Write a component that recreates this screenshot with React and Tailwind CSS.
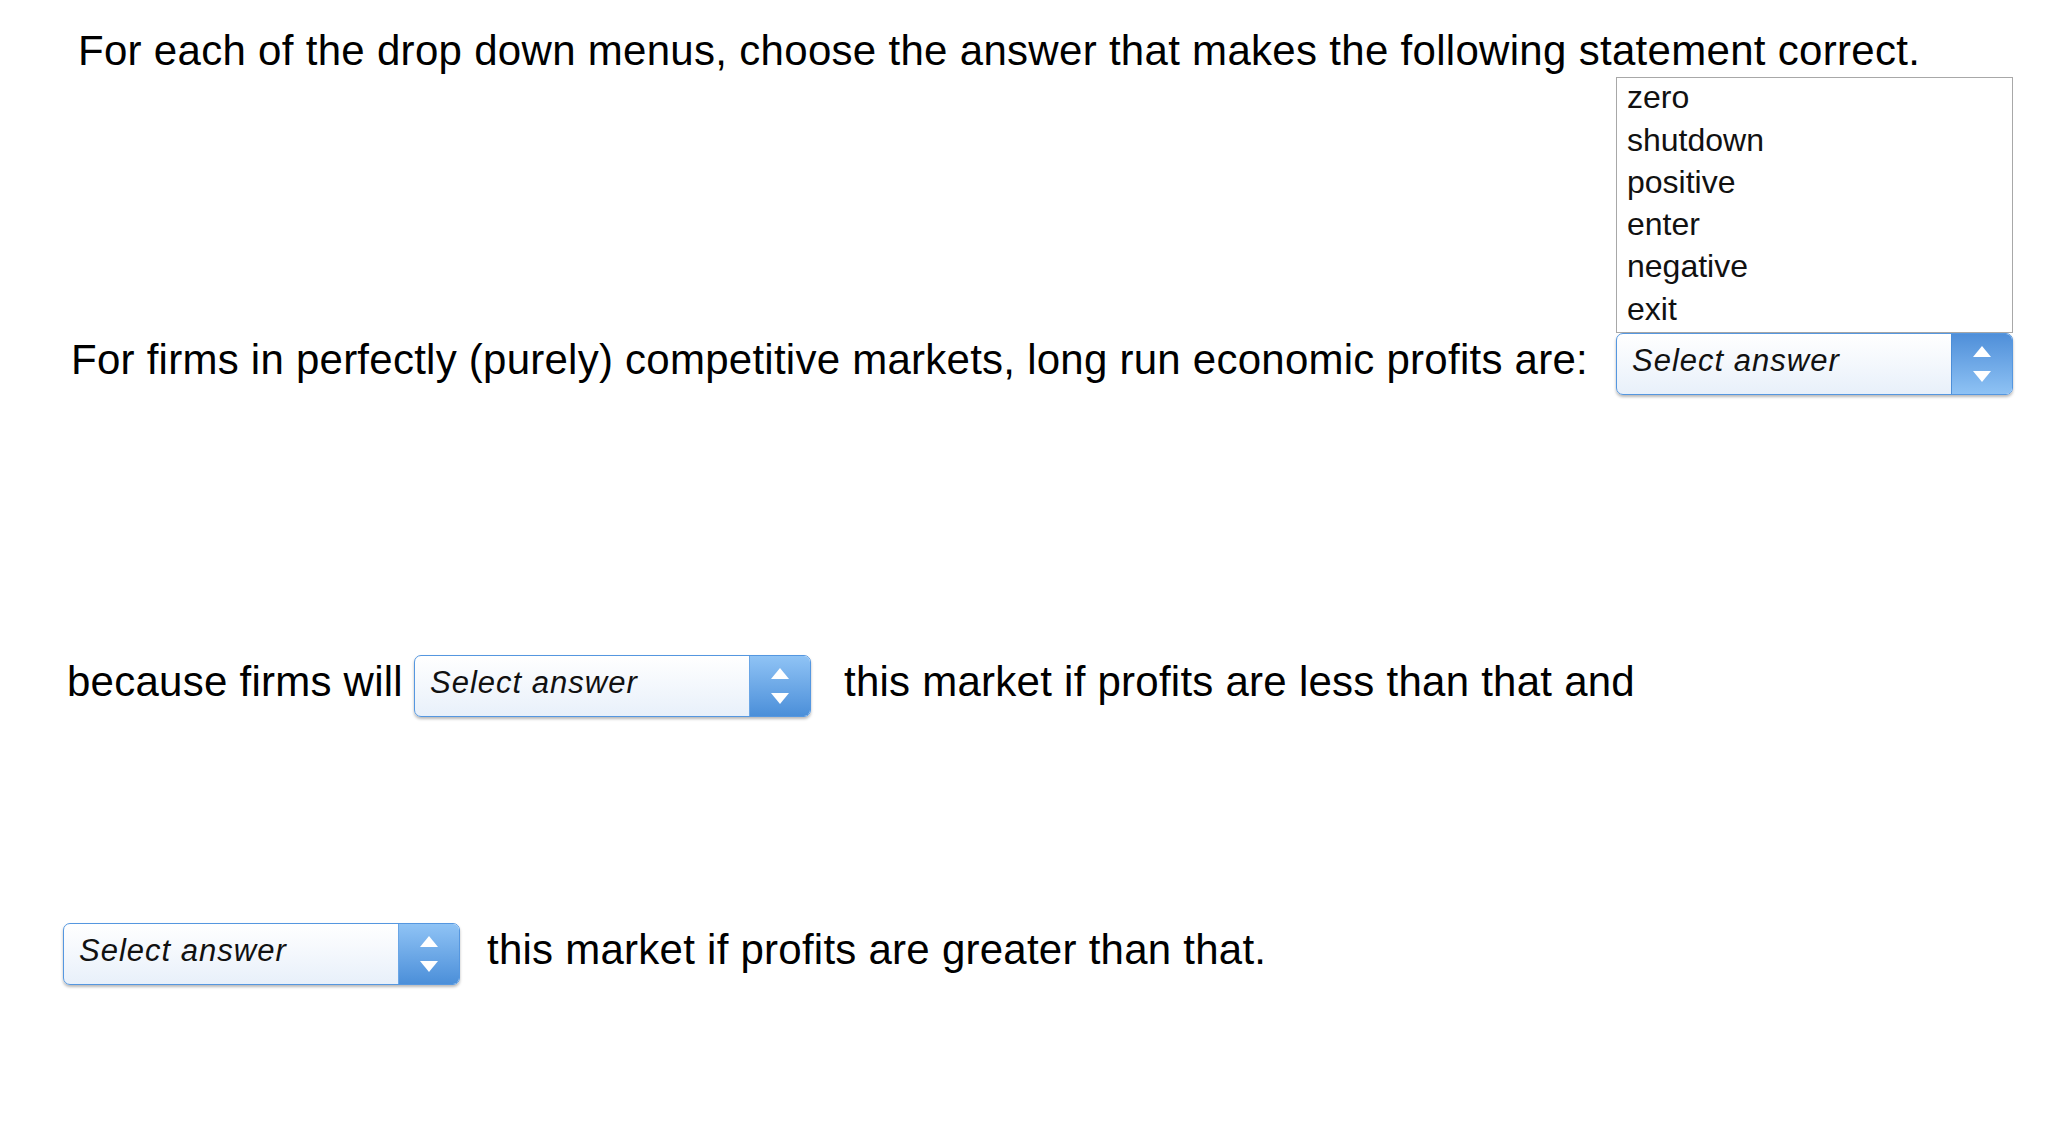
import React from "react";

function Arrows() {
  return (
    <svg width="20" height="36" viewBox="0 0 20 36" className="block">
      <polygon points="10,0 19,11 1,11" fill="#ffffff" />
      <polygon points="1,25 19,25 10,36" fill="#ffffff" />
    </svg>
  );
}

function Select({ active = false }) {
  return (
    <div className="relative w-[397px] h-[62px] shrink-0 rounded-[7px] border border-[#5597e0] shadow-[0_2px_3px_rgba(0,0,0,0.28)] bg-gradient-to-b from-white to-[#e8f0fa] flex overflow-hidden">
      <div className="flex-1 flex items-center pl-[15px]">
        <span className="text-[31px] leading-[31px] italic tracking-[1px] text-[#111] pb-[7px] whitespace-nowrap">
          Select answer
        </span>
      </div>
      <div
        className={
          active
            ? "w-[61px] h-full flex items-center justify-center border-l border-[#4d8fd8] bg-gradient-to-b from-[#4f8fd9] to-[#8ec2f4]"
            : "w-[61px] h-full flex items-center justify-center border-l border-[#6aa6e6] bg-gradient-to-b from-[#8fc3f5] to-[#4b8fd9]"
        }
      >
        <Arrows />
      </div>
    </div>
  );
}

const options = ["zero", "shutdown", "positive", "enter", "negative", "exit"];

export default function App() {
  return (
    <div className="w-[2046px] h-[1137px] overflow-hidden bg-white text-black font-['Liberation_Sans',Arial,sans-serif]">
      <p className="pl-[78px] pt-[30px] text-[42px] leading-[42px] tracking-[0.3px] whitespace-nowrap">
        For each of the drop down menus, choose the answer that makes the following statement correct.
      </p>

      <div className="mt-[261px] pl-[71px] flex items-center">
        <span className="w-[1545px] shrink-0 text-[42px] leading-[42px] tracking-[0.25px] pb-[8px] whitespace-nowrap">
          For firms in perfectly (purely) competitive markets, long run economic profits are:
        </span>
        <div className="relative">
          <div className="absolute bottom-full left-0 w-[397px] bg-white border border-[#a8a8a8]">
            {options.map((o) => (
              <div
                key={o}
                className="pl-[10px] pb-[4px] text-[32px] leading-[38.3px] text-[#111] whitespace-nowrap"
              >
                {o}
              </div>
            ))}
          </div>
          <Select active />
        </div>
      </div>

      <div className="mt-[260px] pl-[67px] flex items-center">
        <span className="w-[347px] shrink-0 text-[42px] leading-[42px] tracking-[0.25px] pb-[8px] whitespace-nowrap">
          because firms will
        </span>
        <Select />
        <span className="ml-[33px] text-[42px] leading-[42px] tracking-[0.25px] pb-[8px] whitespace-nowrap">
          this market if profits are less than that and
        </span>
      </div>

      <div className="mt-[206px] pl-[63px] flex items-center">
        <Select />
        <span className="ml-[27px] text-[42px] leading-[42px] tracking-[0.25px] pb-[8px] whitespace-nowrap">
          this market if profits are greater than that.
        </span>
      </div>
    </div>
  );
}
